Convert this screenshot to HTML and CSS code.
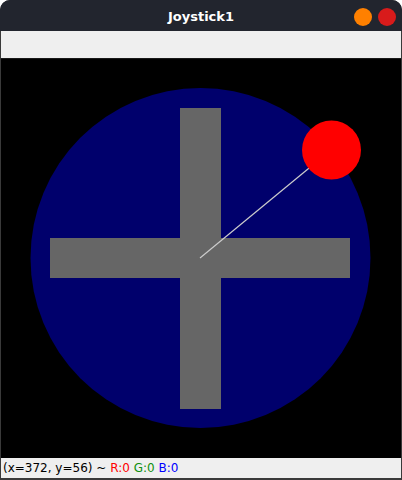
FILE: index.html
```
<!DOCTYPE html>
<html>
<head>
<meta charset="utf-8">
<link rel="stylesheet" href="styles.css">
</head>
<body>
<div class="window">
  <div class="titlebar">
    <span class="title">Joystick1</span>
    <div class="buttons">
      <span class="btn btn-min"></span>
      <span class="btn btn-close"></span>
    </div>
  </div>
  <div class="toolbar"></div>
  <div class="canvas">
    <svg width="400" height="399" viewBox="0 0 400 399">
      <rect x="0" y="0" width="400" height="399" fill="#000"/>
      <circle cx="199.5" cy="199" r="170" fill="#00006c"/>
      <rect x="49" y="179" width="300" height="40" fill="#666666"/>
      <rect x="179" y="49" width="41" height="301" fill="#666666"/>
      <line x1="199" y1="199" x2="330" y2="91" stroke="#cccccc" stroke-width="1.2"/>
      <circle cx="330.5" cy="91" r="29.5" fill="#ff0000"/>
    </svg>
  </div>
  <div class="statusbar"><span>(x=372, y=56) ~ </span><span class="r">R:0</span> <span class="g">G:0</span> <span class="b">B:0</span></div>
</div>
</body>
</html>
```
FILE: styles.css
```
html, body {
  margin: 0;
  padding: 0;
  background: #ffffff;
}
.window {
  width: 402px;
  height: 480px;
  background: #3a3a3a;
  border-radius: 10px 10px 0 0;
  overflow: hidden;
  display: flex;
  flex-direction: column;
}
.titlebar {
  height: 31px;
  background: #22252e;
  display: flex;
  align-items: center;
  justify-content: center;
  position: relative;
  flex: none;
}
.title {
  color: #ffffff;
  font-family: "DejaVu Sans", sans-serif;
  font-weight: bold;
  font-size: 13px;
  margin-top: 1px;
}
.buttons {
  position: absolute;
  right: 6px;
  top: 8px;
  display: flex;
  gap: 6px;
}
.btn {
  width: 18px;
  height: 18px;
  border-radius: 50%;
  display: block;
}
.btn-min { background: #ff8000; }
.btn-close { background: #d81b1b; }
.toolbar {
  height: 27px;
  margin: 0 1px;
  background: #efefef;
  border-bottom: 1px solid #1a1a1a;
  flex: none;
}
.canvas {
  height: 399px;
  margin: 0 1px;
  background: #000;
  flex: none;
  display: flex;
}
.canvas svg { display: block; }
.statusbar {
  height: 20px;
  margin: 0 1px;
  background: #efefef;
  font-family: "DejaVu Sans", sans-serif;
  font-size: 12px;
  line-height: 20px;
  color: #000;
  padding-left: 2px;
  white-space: pre;
  flex: none;
}
.r { color: #ff0000; }
.g { color: #0f8f0f; }
.b { color: #0000ff; }
```
